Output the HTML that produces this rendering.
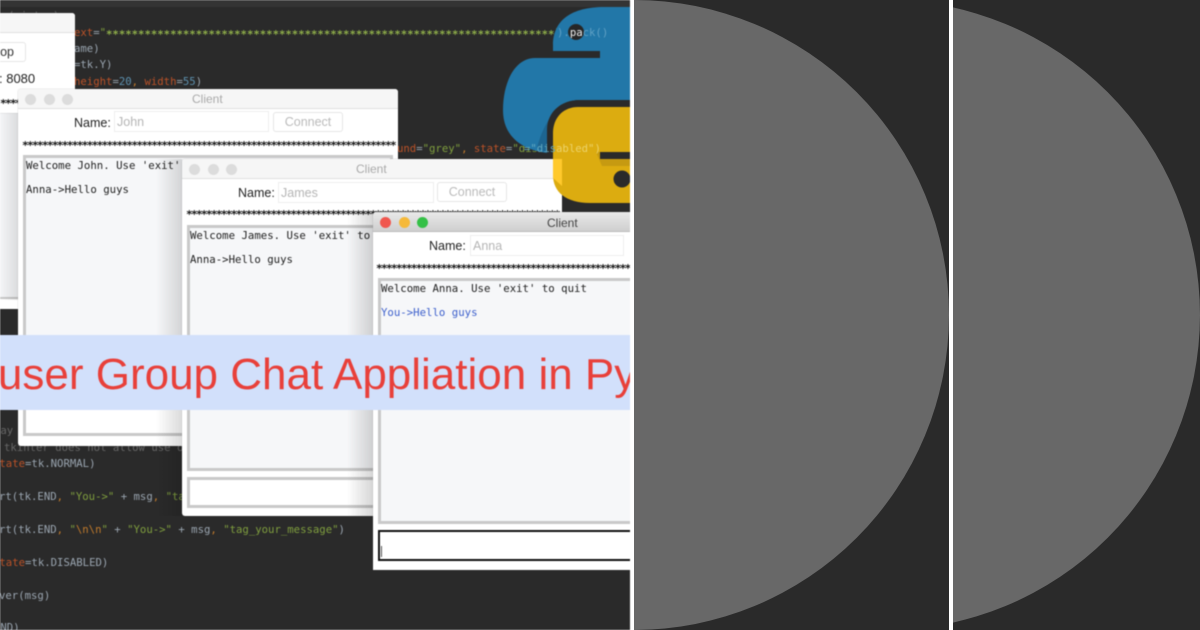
<!DOCTYPE html>
<html><head><meta charset="utf-8"><style>
html,body{margin:0;padding:0;background:#fff}
#p{position:relative;width:1200px;height:630px;overflow:hidden;background:#fff}
#l{position:absolute;left:0;top:0;width:630px;height:630px;overflow:hidden;background:#2a2a2a;filter:blur(.5px)}
.a{position:absolute;white-space:pre}
.c{font-family:"DejaVu Sans Mono","Liberation Mono",monospace;font-size:10.65px;line-height:14px;color:#9aa5b0}
.r{color:#bb5228}.g{color:#7f9e3e}.b{color:#5c90ae}.o{color:#c07a2c}.d{color:#666}
.ast{font-weight:bold;color:#8fae4a;position:relative;top:2px;font-size:10.65px}
.w{position:absolute;background:#fff;box-shadow:0 0 1px rgba(0,0,0,.35)}
.t{position:absolute;left:0;top:0;right:0;height:20px;background:#f6f6f6;border-bottom:1px solid #e0e0e0;box-sizing:border-box;border-radius:3px 3px 0 0}
.dot{position:absolute;top:5px;width:11px;height:11px;border-radius:50%;background:#dcdcdc}
.ct{position:absolute;top:3px;font:12px "Liberation Sans",sans-serif;color:#aaa}
.s{font:12.5px "Liberation Sans",sans-serif;color:#222}
.in{position:absolute;background:#fff;border:1px solid #eee;box-sizing:border-box;font:12.5px "Liberation Sans",sans-serif;color:#b5b5b5;padding:3px 2px;height:21px}
.bt{position:absolute;background:#fff;border:1px solid #e6e6e6;border-radius:3px;box-sizing:border-box;font:12.5px "Liberation Sans",sans-serif;color:#bbb;text-align:center;height:20px;line-height:18px}
.st{position:absolute;font:bold 11px "DejaVu Sans Mono",monospace;letter-spacing:-1.65px;color:#111;white-space:pre;line-height:10px;overflow:hidden;height:10px}
.box{position:absolute;background:#f6f7f9;border:3px solid #c9c9c9;box-sizing:border-box}
.m{font-family:"DejaVu Sans Mono","Liberation Mono",monospace;font-size:10.7px;color:#222;line-height:14px;position:absolute;white-space:pre}
.ent{position:absolute;background:#fff;border:3px solid #c9c9c9;box-sizing:border-box}
</style></head><body><div id="p">
<div id="l">
<div class="a" style="left:0;top:0;width:630px;height:7px;background:#343434"></div>
<div class="a c d" style="left:8px;top:9px">(winter)</div>
<div class="a c" style="left:74px;top:26px"><span class="r">ext</span>=<span class="g">"</span><span class="ast">**********************************************************************</span><span class="g">"</span>).</div>
<div class="a c" style="left:74px;top:42px">ame)</div>
<div class="a c" style="left:74px;top:58px">=tk.Y)</div>
<div class="a c" style="left:74px;top:75px"><span class="r">height</span>=<span class="b">20</span><span class="o">,</span> <span class="r">width</span>=<span class="b">55</span>)</div>
<div class="a c" style="left:397px;top:142px"><span class="r">und</span>=<span class="g">"grey"</span><span class="o">,</span> <span class="r">state</span>=<span class="g">"disabled"</span>)</div>
<div class="a c d" style="left:-6px;top:424px">day</div>
<div class="a c d" style="left:4px;top:441px">tkinter does not allow use of</div>
<div class="a c" style="left:-7px;top:457px"><span class="r">state</span>=tk.NORMAL)</div>
<div class="a c" style="left:-1px;top:490px">rt(tk.END<span class="o">,</span> <span class="g">"You-&gt;"</span> + msg<span class="o">,</span> <span class="g">"tag_your_message"</span>)</div>
<div class="a c" style="left:-1px;top:523px">rt(tk.END<span class="o">,</span> <span class="g">"<span class="o">\n\n</span>"</span> + <span class="g">"You-&gt;"</span> + msg<span class="o">,</span> <span class="g">"tag_your_message"</span>)</div>
<div class="a c" style="left:-7px;top:556px"><span class="r">state</span>=tk.DISABLED)</div>
<div class="a c" style="left:-1px;top:589px">ver(msg)</div>
<div class="a c" style="left:-6px;top:621px">END)</div>

<div class="a" style="left:0;top:100px;width:20px;height:209px;background:#f4f5f7"></div>
<div class="a" style="left:0;top:297px;width:20px;height:2px;background:#c9c9c9"></div>
<div class="a" style="left:0;top:299px;width:20px;height:10px;background:#fff"></div>
<div class="a" style="left:0;top:100px;width:20px;height:200px;background:linear-gradient(90deg,rgba(0,0,0,0) 0,rgba(0,0,0,.1) 90%)"></div>

<div class="w" style="left:-200px;top:13px;width:275px;height:100px;border-radius:3px">
<div class="t"></div>
<div class="bt" style="left:170px;top:29px;width:56px;color:#333;text-align:right;padding-right:11px">Stop</div>
<div class="a s" style="left:199px;top:58px;font-size:13px">: 8080</div>
<div class="st" style="left:200px;top:86px;width:75px">*****************</div>
</div>

<div class="w" style="left:18px;top:89px;width:380px;height:357px;border-radius:3px">
<div class="t"></div>
<div class="dot" style="left:7px"></div><div class="dot" style="left:26px"></div><div class="dot" style="left:44px"></div>
<div class="ct" style="left:174px">Client</div>
<div class="a s" style="left:56px;top:27px">Name:</div>
<div class="in" style="left:96px;top:22px;width:155px">John</div>
<div class="bt" style="left:255px;top:23px;width:70px">Connect</div>
<div class="st" style="left:4px;top:52px;width:374px">****************************************************************************************************************</div>
<div class="box" style="left:5px;top:66px;width:370px;height:250px"></div>
<div class="m" style="left:8px;top:70px">Welcome John. Use 'exit' to quit</div>
<div class="m" style="left:8px;top:94px">Anna-&gt;Hello guys</div>
<div class="ent" style="left:5px;top:316px;width:370px;height:31px"></div>
</div>

<div class="a" style="left:156px;top:159px;width:26px;height:357px;background:linear-gradient(90deg,rgba(0,0,0,0),rgba(0,0,0,.14))"></div>

<div class="w" style="left:182px;top:159px;width:380px;height:357px;border-radius:3px">
<div class="t"></div>
<div class="dot" style="left:7px"></div><div class="dot" style="left:26px"></div><div class="dot" style="left:44px"></div>
<div class="ct" style="left:174px">Client</div>
<div class="a s" style="left:56px;top:27px">Name:</div>
<div class="in" style="left:96px;top:23px;width:156px">James</div>
<div class="bt" style="left:255px;top:23px;width:70px">Connect</div>
<div class="st" style="left:4px;top:51px;width:374px">****************************************************************************************************************</div>
<div class="box" style="left:5px;top:66px;width:370px;height:246px"></div>
<div class="m" style="left:8px;top:70px">Welcome James. Use 'exit' to quit</div>
<div class="m" style="left:8px;top:94px">Anna-&gt;Hello guys</div>
<div class="ent" style="left:5px;top:318px;width:370px;height:31px"></div>
</div>

<div class="a" style="left:347px;top:212px;width:26px;height:304px;background:linear-gradient(90deg,rgba(0,0,0,0),rgba(0,0,0,.16))"></div>

<svg class="a" style="left:0;top:0" width="630" height="630" viewBox="0 0 630 630">
<path fill="#2277a8" d="M632 7H604C572 7 553 20 553 45V58H535C515 58 503 82 503 110C503 135 520 150 548 153V130C548 113 560 100 580 100H632Z"/>
<path fill="#1d6591" d="M537 148C540 135 547 120 556 110C550 118 548 125 548 132V153Z"/>
<rect x="553" y="51" width="47" height="7" fill="#2a2a2a"/>
<circle cx="576" cy="32" r="8" fill="#262626"/>
<path fill="#2a2a2a" d="M632 100H580C560 100 547 113 547 130V156H553V132C553 118 565 107 580 107H632Z"/>
<path fill="#dcac10" d="M632 107H578C563 107 553 118 553 133V175C553 192 566 203 590 203H632Z"/>
<path fill="#ffc92c" d="M553 159H562V186L553 178Z"/>
<path fill="#c09612" d="M596 152H632V166H602Z" opacity=".8"/>
<rect x="600" y="152" width="32" height="7" fill="#2a2a2a"/>
<circle cx="622" cy="179" r="8.5" fill="#2a2a2a"/>
</svg>
<div class="a c" style="left:557px;top:26px;color:#5fa0c4">).<span style="color:#eee">pa</span>ck()</div>
<div class="a c" style="left:524px;top:142px;color:#62a9c0">=<span style="color:#62a9c0">"dis</span><span style="color:#ecd268">abled")</span></div>

<div class="w" style="left:373px;top:212px;width:280px;height:358px;border-radius:3px 0 0 0">
<div class="t" style="background:linear-gradient(#e9e9e9,#cfcfcf);border-bottom:1px solid #bbb"></div>
<div class="dot" style="left:7px;background:#f0574f"></div><div class="dot" style="left:26px;background:#f5b93a"></div><div class="dot" style="left:44px;background:#35c047"></div>
<div class="ct" style="left:174px;color:#444;top:4px">Client</div>
<div class="a s" style="left:56px;top:27px">Name:</div>
<div class="in" style="left:97px;top:23px;width:154px">Anna</div>
<div class="st" style="left:3px;top:52px;width:260px">*****************************************************************************</div>
<div class="box" style="left:5px;top:66px;width:270px;height:246px"></div>
<div class="m" style="left:8px;top:70px">Welcome Anna. Use 'exit' to quit</div>
<div class="m" style="left:8px;top:94px;color:#3c5fcc">You-&gt;Hello guys</div>
<div class="ent" style="left:5px;top:318px;width:270px;height:31px;border:2px solid #111"></div>
<div class="a" style="left:8px;top:334px;width:1px;height:11px;background:#555"></div>
</div>

<div class="a" style="left:0;top:335px;width:630px;height:75px;background:#d2e0fb;overflow:hidden">
<div class="a" style="left:-95px;top:15px;font:44px/50px 'Liberation Sans',sans-serif;color:#e8403a">Multiuser Group Chat Appliation in Python</div>
</div>
</div>

<div class="a" style="left:634px;top:0;width:315px;height:630px;background:#2a2a2a;overflow:hidden">
<div class="a" style="left:-315px;top:0;width:630px;height:630px;border-radius:50%;background:#686868"></div>
</div>
<div class="a" style="left:953px;top:0;width:247px;height:630px;background:#2a2a2a;overflow:hidden">
<div class="a" style="left:-383px;top:0;width:630px;height:630px;border-radius:50%;background:#686868"></div>
</div>
</div></body></html>
